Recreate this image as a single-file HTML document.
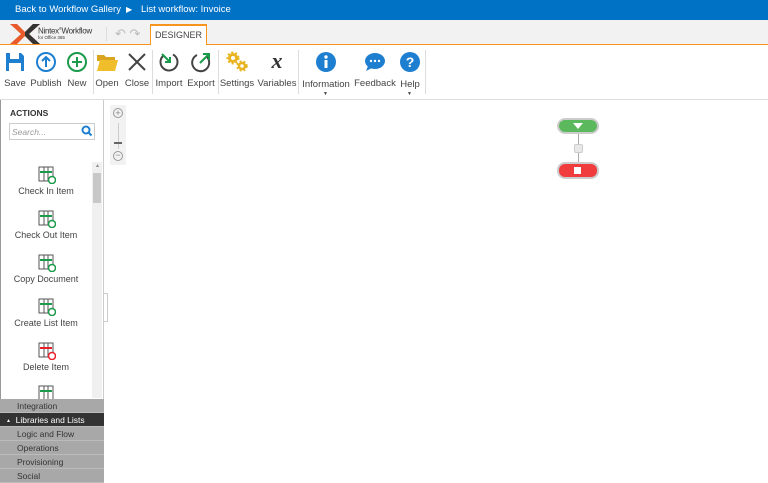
<!DOCTYPE html>
<html><head><meta charset="utf-8"><style>
*{margin:0;padding:0;box-sizing:border-box}
body{width:768px;height:480px;overflow:hidden;background:#fff;font-family:"Liberation Sans","DejaVu Sans",sans-serif;position:relative}
.a{position:absolute}
.lbl{position:absolute;top:78px;font-size:9.5px;color:#444;text-align:center;width:56px;margin-left:-28px}
.sep{position:absolute;top:50px;width:1px;height:44px;background:#ddd}
.ic{position:absolute;top:51px;width:22px;height:22px;margin-left:-11px}
.item{position:absolute;left:0;width:92px;text-align:center;font-size:9px;color:#444}
.cat{position:absolute;left:0;width:104px;height:14px;font-size:8.5px;color:#333;padding-left:17px;line-height:14px;background:#a8a8a8;border-bottom:1px solid #bbb}
</style></head><body>
<div class="a" style="left:0;top:0;width:768px;height:20px;background:#0072c6;color:#fff;font-size:9.5px;line-height:20px">
<span class="a" style="left:15px">Back to Workflow Gallery</span>
<span class="a" style="left:126px;top:0;font-size:8px">&#9654;</span>
<span class="a" style="left:141px">List workflow: Invoice</span></div>
<div class="a" style="left:0;top:20px;width:768px;height:25px;background:#f2f2f2;border-bottom:1px solid #f7941d"></div>
<svg class="a" style="left:9px;top:23px" width="32" height="22"><path d="M1 1 L12 11 L1 21 L8 21 L16 13 L24 21 L31 21 L20 11 L31 1 L24 1 L16 9 L8 1Z" fill="#e85a2a"/><path d="M16 9 L24 1 L31 1 L20 11 L31 21 L24 21 L16 13Z" fill="#333"/></svg>
<div class="a" style="left:38px;top:26px;font-size:8px;color:#333;letter-spacing:-0.3px">Nintex<sup style="font-size:4px">®</sup>Workflow</div>
<div class="a" style="left:38px;top:35px;font-size:4.5px;color:#333">for Office 365</div>
<div class="a" style="left:106px;top:27px;width:1px;height:14px;background:#ddd"></div>
<div class="a" style="left:115px;top:26px;font-size:13px;color:#bbb">&#8630; &#8631;</div>
<div class="a" style="left:150px;top:24px;width:57px;height:21px;background:#fff;border:1px solid #f7941d;border-bottom:none;border-top-width:2px;font-size:9px;color:#444;text-align:center;line-height:18px">DESIGNER</div>
<div class="a" style="left:0;top:45px;width:768px;height:55px;border-bottom:1px solid #ddd"></div>
<svg class="ic" style="left:15px" viewBox="0 0 22 22"><path d="M2 2h15l3 3v15H2z" fill="#1e7fd0"/><rect x="6" y="2" width="9" height="6" fill="#fff"/><rect x="5" y="12" width="12" height="8" fill="#fff"/></svg>
<svg class="ic" style="left:46px" viewBox="0 0 22 22"><circle cx="11" cy="11" r="9" fill="none" stroke="#1e7fd0" stroke-width="2"/><path d="M11 16V6M7 10l4-4 4 4" fill="none" stroke="#1e7fd0" stroke-width="2"/></svg>
<svg class="ic" style="left:77px" viewBox="0 0 22 22"><circle cx="11" cy="11" r="9" fill="none" stroke="#1a9a4a" stroke-width="2"/><path d="M11 6v10M6 11h10" stroke="#1a9a4a" stroke-width="2"/></svg>
<svg class="ic" style="left:107px" viewBox="0 0 22 22"><path d="M1 4h7l2 2h9v4H1z" fill="#d9a520"/><path d="M1 20L4 9h18l-3 11z" fill="#f0bd2b"/></svg>
<svg class="ic" style="left:137px" viewBox="0 0 22 22"><path d="M3 3l16 16M19 3L3 19" stroke="#444" stroke-width="2"/></svg>
<svg class="ic" style="left:169px" viewBox="0 0 22 22"><path d="M15 3.5A8.5 8.5 0 1 1 5 5" fill="none" stroke="#444" stroke-width="2"/><path d="M4 3l8 8M12 6v5H7" fill="none" stroke="#1a9a4a" stroke-width="2"/></svg>
<svg class="ic" style="left:201px" viewBox="0 0 22 22"><path d="M7 4A8.5 8.5 0 1 0 17 6" fill="none" stroke="#444" stroke-width="2"/><path d="M10 12l9-9M13 3h6v6" fill="none" stroke="#1a9a4a" stroke-width="2"/></svg>
<svg class="ic" style="left:237px" viewBox="0 0 22 22"><circle cx="7" cy="7" r="3.5" fill="none" stroke="#e8b520" stroke-width="3"/><circle cx="7" cy="7" r="5.5" fill="none" stroke="#e8b520" stroke-width="2" stroke-dasharray="2 2"/><circle cx="16" cy="15" r="3" fill="none" stroke="#e8b520" stroke-width="2.5"/><circle cx="16" cy="15" r="4.8" fill="none" stroke="#e8b520" stroke-width="1.8" stroke-dasharray="2 2"/></svg>
<div class="ic" style="left:277px;font:italic bold 22px 'Liberation Serif',serif;color:#333;text-align:center;line-height:20px">x</div>
<svg class="ic" style="left:326px" viewBox="0 0 22 22"><circle cx="11" cy="11" r="10" fill="#1e7fd0"/><rect x="9.5" y="9" width="3" height="8" fill="#fff"/><circle cx="11" cy="6" r="1.7" fill="#fff"/></svg>
<svg class="ic" style="left:375px" viewBox="0 0 22 22"><ellipse cx="11" cy="10" rx="10" ry="8" fill="#1e7fd0"/><path d="M4 15l-2 5 6-3z" fill="#1e7fd0"/><circle cx="7" cy="10" r="1.2" fill="#fff"/><circle cx="11" cy="10" r="1.2" fill="#fff"/><circle cx="15" cy="10" r="1.2" fill="#fff"/></svg>
<svg class="ic" style="left:410px" viewBox="0 0 22 22"><circle cx="11" cy="11" r="10" fill="#1e7fd0"/><text x="11" y="16" font-size="14" font-weight="bold" fill="#fff" text-anchor="middle" font-family="Liberation Sans">?</text></svg>
<div class="lbl" style="left:15px">Save</div><div class="lbl" style="left:46px">Publish</div><div class="lbl" style="left:77px">New</div>
<div class="lbl" style="left:107px">Open</div><div class="lbl" style="left:137px">Close</div>
<div class="lbl" style="left:169px">Import</div><div class="lbl" style="left:201px">Export</div>
<div class="lbl" style="left:237px">Settings</div><div class="lbl" style="left:277px">Variables</div>
<div class="lbl" style="left:326px;top:79px">Information</div><div class="lbl" style="left:375px">Feedback</div><div class="lbl" style="left:410px;top:79px">Help</div>
<div class="a" style="left:323px;top:91px;font-size:5px;color:#444">&#9660;</div>
<div class="a" style="left:407px;top:91px;font-size:5px;color:#444">&#9660;</div>
<div class="sep" style="left:93px"></div><div class="sep" style="left:152px"></div><div class="sep" style="left:218px"></div><div class="sep" style="left:298px"></div><div class="sep" style="left:425px"></div>
<div class="a" style="left:0;top:100px;width:104px;height:380px;border-right:1px solid #ccc;border-left:1px solid #999"></div>
<div class="a" style="left:10px;top:108px;font-size:8.5px;font-weight:bold;color:#333">ACTIONS</div>
<div class="a" style="left:9px;top:123px;width:86px;height:17px;border:1px solid #ccc;font-size:8.5px;font-style:italic;color:#999;padding:3px 0 0 2px">Search...</div>
<svg class="a" style="left:81px;top:125px" width="12" height="12"><circle cx="5" cy="5" r="3.5" fill="none" stroke="#1e7fd0" stroke-width="2"/><path d="M7.5 7.5l3 3" stroke="#1e7fd0" stroke-width="2"/></svg>
<div class="a" style="left:92px;top:162px;width:10px;height:236px;background:#f0f0f0"></div>
<div class="a" style="left:93px;top:173px;width:8px;height:30px;background:#c8c8c8"></div>
<div class="a" style="left:95px;top:163px;font-size:5px;color:#888">&#9650;</div>
<svg width="0" height="0" style="position:absolute"><defs><g id="tb"><rect x="1" y="1" width="14" height="14" fill="#fff" stroke="#555"/><line x1="6" y1="1" x2="6" y2="15" stroke="#555"/><line x1="10" y1="1" x2="10" y2="15" stroke="#555"/></g></defs></svg>
<svg class="a" style="left:38px;top:166px" width="18" height="18"><use href="#tb"/><rect x="2" y="5" width="12" height="2" fill="#1a9a4a"/><circle cx="14" cy="14" r="3.5" fill="#fff" stroke="#1a9a4a" stroke-width="1.5"/></svg>
<svg class="a" style="left:38px;top:210px" width="18" height="18"><use href="#tb"/><rect x="2" y="5" width="12" height="2" fill="#1a9a4a"/><circle cx="14" cy="14" r="3.5" fill="#fff" stroke="#1a9a4a" stroke-width="1.5"/></svg>
<svg class="a" style="left:38px;top:254px" width="18" height="18"><use href="#tb"/><rect x="2" y="5" width="12" height="2" fill="#1a9a4a"/><circle cx="14" cy="14" r="3.5" fill="#fff" stroke="#1a9a4a" stroke-width="1.5"/></svg>
<svg class="a" style="left:38px;top:298px" width="18" height="18"><use href="#tb"/><rect x="2" y="5" width="12" height="2" fill="#1a9a4a"/><circle cx="14" cy="14" r="3.5" fill="#fff" stroke="#1a9a4a" stroke-width="1.5"/></svg>
<svg class="a" style="left:38px;top:342px" width="18" height="18"><use href="#tb"/><rect x="2" y="5" width="12" height="2" fill="#e8202a"/><circle cx="14" cy="14" r="3.5" fill="#fff" stroke="#e8202a" stroke-width="1.5"/></svg>
<svg class="a" style="left:38px;top:385px" width="18" height="18"><use href="#tb"/><rect x="2" y="5" width="12" height="2" fill="#1a9a4a"/></svg>
<div class="item" style="top:186px">Check In Item</div>
<div class="item" style="top:230px">Check Out Item</div>
<div class="item" style="top:274px">Copy Document</div>
<div class="item" style="top:318px">Create List Item</div>
<div class="item" style="top:362px">Delete Item</div>
<div class="cat" style="top:399px">Integration</div>
<div class="cat" style="top:413px;background:#333;color:#fff;padding-left:6px"><span style="font-size:5px;vertical-align:1px">&#9650;</span>&nbsp; Libraries and Lists</div>
<div class="cat" style="top:427px">Logic and Flow</div>
<div class="cat" style="top:441px">Operations</div>
<div class="cat" style="top:455px">Provisioning</div>
<div class="cat" style="top:469px">Social</div>
<div class="a" style="left:104px;top:293px;width:4px;height:29px;border:1px solid #ccc;border-left:none;background:#fff"></div>
<div class="a" style="left:110px;top:105px;width:16px;height:60px;background:#f2f2f2;border-radius:2px"></div>
<div class="a" style="left:113px;top:108px;width:10px;height:10px;border:1px solid #999;border-radius:50%;font-size:9px;line-height:8px;text-align:center;color:#888">+</div>
<div class="a" style="left:118px;top:123px;width:1px;height:26px;background:#ccc"></div>
<div class="a" style="left:114px;top:142px;width:8px;height:2px;background:#666"></div>
<div class="a" style="left:113px;top:151px;width:10px;height:10px;border:1px solid #999;border-radius:50%;font-size:9px;line-height:7px;text-align:center;color:#888">−</div>
<div class="a" style="left:578px;top:133px;width:1px;height:30px;background:#aaa"></div>
<div class="a" style="left:574px;top:144px;width:9px;height:9px;background:#e8e8e8;border:1px solid #ccc;border-radius:2px"></div>
<div class="a" style="left:557px;top:118px;width:42px;height:16px;background:#5cb85c;border:2px solid #ccc;border-radius:8px"></div>
<div class="a" style="left:573px;top:123px;width:0;height:0;border-left:5px solid transparent;border-right:5px solid transparent;border-top:6px solid #fff"></div>
<div class="a" style="left:557px;top:162px;width:42px;height:17px;background:#f03c3c;border:2px solid #ccc;border-radius:8px"></div>
<div class="a" style="left:574px;top:167px;width:7px;height:7px;background:#fff"></div>
</body></html>
